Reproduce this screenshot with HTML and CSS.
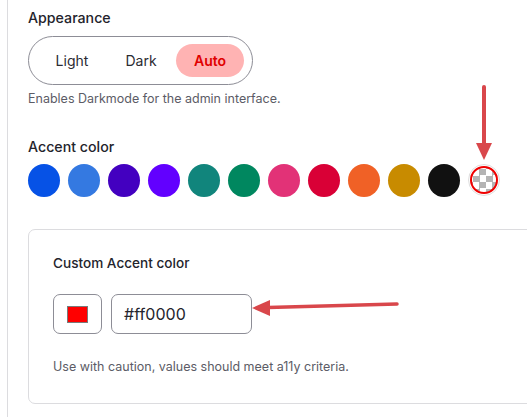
FILE: index.html
```html
<!DOCTYPE html>
<html>
<head>
<meta charset="utf-8">
<link rel="stylesheet" href="styles.css">
</head>
<body>
<div class="page">
  <section class="field">
    <div class="label">Appearance</div>
    <div class="segmented">
      <button class="seg">Light</button>
      <button class="seg">Dark</button>
      <button class="seg active">Auto</button>
    </div>
    <div class="help help-first">Enables Darkmode for the admin interface.</div>
  </section>

  <section class="field accent">
    <div class="label">Accent color</div>
    <div class="swatches">
      <span class="dot c1"></span>
      <span class="dot c2"></span>
      <span class="dot c3"></span>
      <span class="dot c4"></span>
      <span class="dot c5"></span>
      <span class="dot c6"></span>
      <span class="dot c7"></span>
      <span class="dot c8"></span>
      <span class="dot c9"></span>
      <span class="dot c10"></span>
      <span class="dot c11"></span>
      <span class="custom"><span class="checker"></span></span>
    </div>
  </section>

  <section class="card">
    <div class="card-title">Custom Accent color</div>
    <div class="inputs">
      <div class="picker"><span class="picker-chip"></span></div>
      <div class="hex">#ff0000</div>
    </div>
    <div class="help card-help">Use with caution, values should meet a11y criteria.</div>
  </section>

  <svg class="arrows" width="527" height="417" viewBox="0 0 527 417">
    <line x1="484" y1="87" x2="484" y2="146" stroke="#d9474b" stroke-width="4" stroke-linecap="round"/>
    <polygon points="476,143 492,143 484,160" fill="#d9474b"/>
    <line x1="268" y1="307.5" x2="397" y2="304" stroke="#d9474b" stroke-width="3.5" stroke-linecap="round"/>
    <polygon points="252,308 270,300 270,316" fill="#d9474b"/>
  </svg>
</div>
</body>
</html>
```
FILE: styles.css
```css
html, body {
  margin: 0;
  padding: 0;
  background: #fff;
}
body {
  font-family: Inter, "Noto Sans", sans-serif;
  color: #24242c;
  width: 527px;
  height: 417px;
  overflow: hidden;
}
.page {
  position: relative;
  margin-left: 7px;
  border-left: 1px solid #dcdcdf;
  padding: 8px 0 0 20px;
  height: 409px;
}
.label {
  font-size: 14.2px;
  line-height: 20px;
  font-weight: 500;
  color: #24242c;
}
.segmented {
  margin-top: 8px;
  display: inline-flex;
  gap: 1px;
  box-sizing: border-box;
  width: 225px;
  height: 49px;
  padding: 7px 8px 7px 9px;
  border: 1px solid #8d8d96;
  border-radius: 25px;
}
.seg {
  width: 68px;
  height: 33px;
  border: 0;
  background: transparent;
  border-radius: 17px;
  font-family: Inter, sans-serif;
  font-size: 14px;
  color: #2b2b33;
  padding: 0;
}
.seg.active {
  background: #ffb3b3;
  color: #e00000;
  font-weight: 600;
}
.help {
  font-size: 12.5px;
  line-height: 16px;
  color: #5c5c66;
}
.help-first {
  margin-top: 6px;
}
.accent {
  margin-top: 30px;
}
.swatches {
  display: flex;
  gap: 8px;
  margin-top: 7px;
}
.dot {
  width: 32px;
  height: 33px;
  border-radius: 50%;
  display: block;
}
.c1 { background: #0652e6; }
.c2 { background: #3479e1; }
.c3 { background: #4300c0; }
.c4 { background: #6200ff; }
.c5 { background: #11857c; }
.c6 { background: #00875f; }
.c7 { background: #e23277; }
.c8 { background: #d90036; }
.c9 { background: #f06126; }
.c10 { background: #c88b00; }
.c11 { background: #111111; }
.custom {
  box-sizing: border-box;
  width: 32px;
  height: 32px;
  border-radius: 50%;
  border: 1px solid #dedede;
  padding: 1px;
  display: flex;
}
.checker {
  flex: 1;
  border-radius: 50%;
  border: 2px solid #f00000;
  background: repeating-conic-gradient(#b4b4b4 0 25%, #ffffff 0 50%) 1px 1px / 13px 13px;
}
.card {
  margin-top: 32px;
  box-sizing: border-box;
  width: 520px;
  height: 175px;
  border: 1px solid #dcdcdf;
  border-radius: 7px;
  padding: 23px 24px 0;
}
.card-title {
  font-size: 13.6px;
  line-height: 20px;
  font-weight: 500;
  color: #24242c;
}
.inputs {
  display: flex;
  gap: 9px;
  margin-top: 21px;
}
.picker {
  box-sizing: border-box;
  width: 49px;
  height: 40px;
  border: 1px solid #8d8d96;
  border-radius: 7px;
  display: flex;
  align-items: center;
  justify-content: center;
}
.picker-chip {
  box-sizing: border-box;
  width: 21px;
  height: 17px;
  background: #ff0000;
  border: 1px solid #7a7a7a;
}
.hex {
  box-sizing: border-box;
  width: 141px;
  height: 40px;
  border: 1px solid #8d8d96;
  border-radius: 7px;
  padding-left: 12px;
  display: flex;
  align-items: center;
  font-size: 16px;
  color: #24242c;
}
.card-help {
  margin-top: 25px;
}
.arrows {
  position: absolute;
  left: -8px;
  top: 0;
  pointer-events: none;
}
```
